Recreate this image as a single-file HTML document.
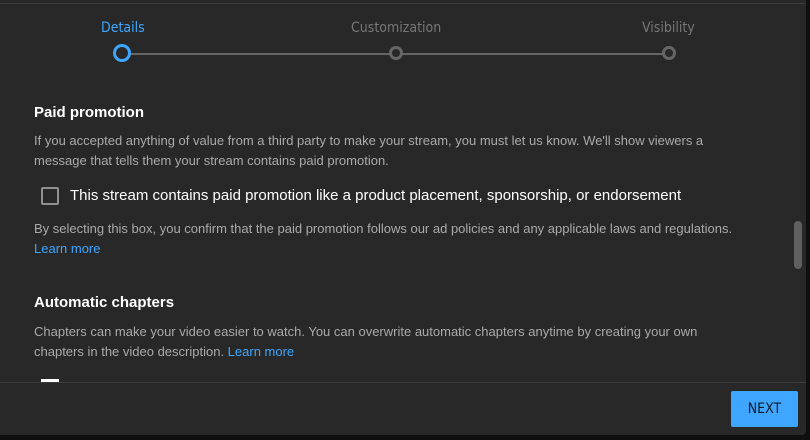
<!DOCTYPE html>
<html><head><style>
body{margin:0;width:810px;height:440px;background:#0f0f0f;overflow:hidden;font-family:"Liberation Sans",sans-serif;position:relative}
.dlg{position:absolute;left:0;top:0;width:806px;height:435px;background:#282828;border-radius:0 0 4px 0}
.topline{position:absolute;left:0;top:3px;width:806px;height:1px;background:#3a3a3a}
.step{position:absolute;top:20px;font-size:14px;color:#777;font-family:"DejaVu Sans Condensed","Liberation Sans",sans-serif}
.line{position:absolute;top:53px;height:2px;background:#666}
.dot{position:absolute;width:10px;height:10px;border:3px solid #666;border-radius:50%;box-sizing:content-box}
.c{position:absolute;left:34px;color:#aaa;font-size:13px;line-height:20px}
h3{position:absolute;left:34px;margin:0;color:#fff;font-size:15px;font-weight:bold}
a{color:#3ea6ff;text-decoration:none}
</style></head><body>
<div class="dlg">
<div class="topline"></div>
<div class="step" style="left:101px;color:#3ea6ff">Details</div>
<div class="step" style="left:351px">Customization</div>
<div class="step" style="left:642px">Visibility</div>
<div class="line" style="left:128px;width:540px"></div>
<div class="dot" style="left:113px;top:44px;width:12px;height:12px;border-color:#3ea6ff;background:#282828"></div>
<div class="dot" style="left:389px;top:46px;width:8px;height:8px;background:#282828"></div>
<div class="dot" style="left:662px;top:46px;width:8px;height:8px;background:#282828"></div>

<h3 style="top:104px">Paid promotion</h3>
<div class="c" style="top:131px;width:720px">If you accepted anything of value from a third party to make your stream, you must let us know. We'll show viewers a message that tells them your stream contains paid promotion.</div>
<div style="position:absolute;left:41px;top:187px;width:14px;height:14px;border:2px solid #909090;border-radius:2px"></div>
<div style="position:absolute;left:70px;top:187px;color:#fff;font-size:15px;font-weight:500">This stream contains paid promotion like a product placement, sponsorship, or endorsement</div>
<div class="c" style="top:219px;width:740px">By selecting this box, you confirm that the paid promotion follows our ad policies and any applicable laws and regulations.<br><a>Learn more</a></div>
<h3 style="top:294px">Automatic chapters</h3>
<div class="c" style="top:322px;width:690px">Chapters can make your video easier to watch. You can overwrite automatic chapters anytime by creating your own chapters in the video description. <a>Learn more</a></div>
<div style="position:absolute;left:41px;top:379px;width:18px;height:3px;background:#fff"></div>
<div style="position:absolute;left:794px;top:221px;width:8px;height:48px;background:#5f5f5f;border-radius:4px"></div>
<div style="position:absolute;left:0;top:382px;width:806px;height:1px;background:#3d3d3d"></div>
<div style="position:absolute;left:731px;top:391px;width:67px;height:36px;background:#3ea6ff;border-radius:2px;color:#0d1a26;font-size:14px;line-height:36px;text-align:center;font-family:'DejaVu Sans Condensed','Liberation Sans',sans-serif">NEXT</div>
</div>
</body></html>
